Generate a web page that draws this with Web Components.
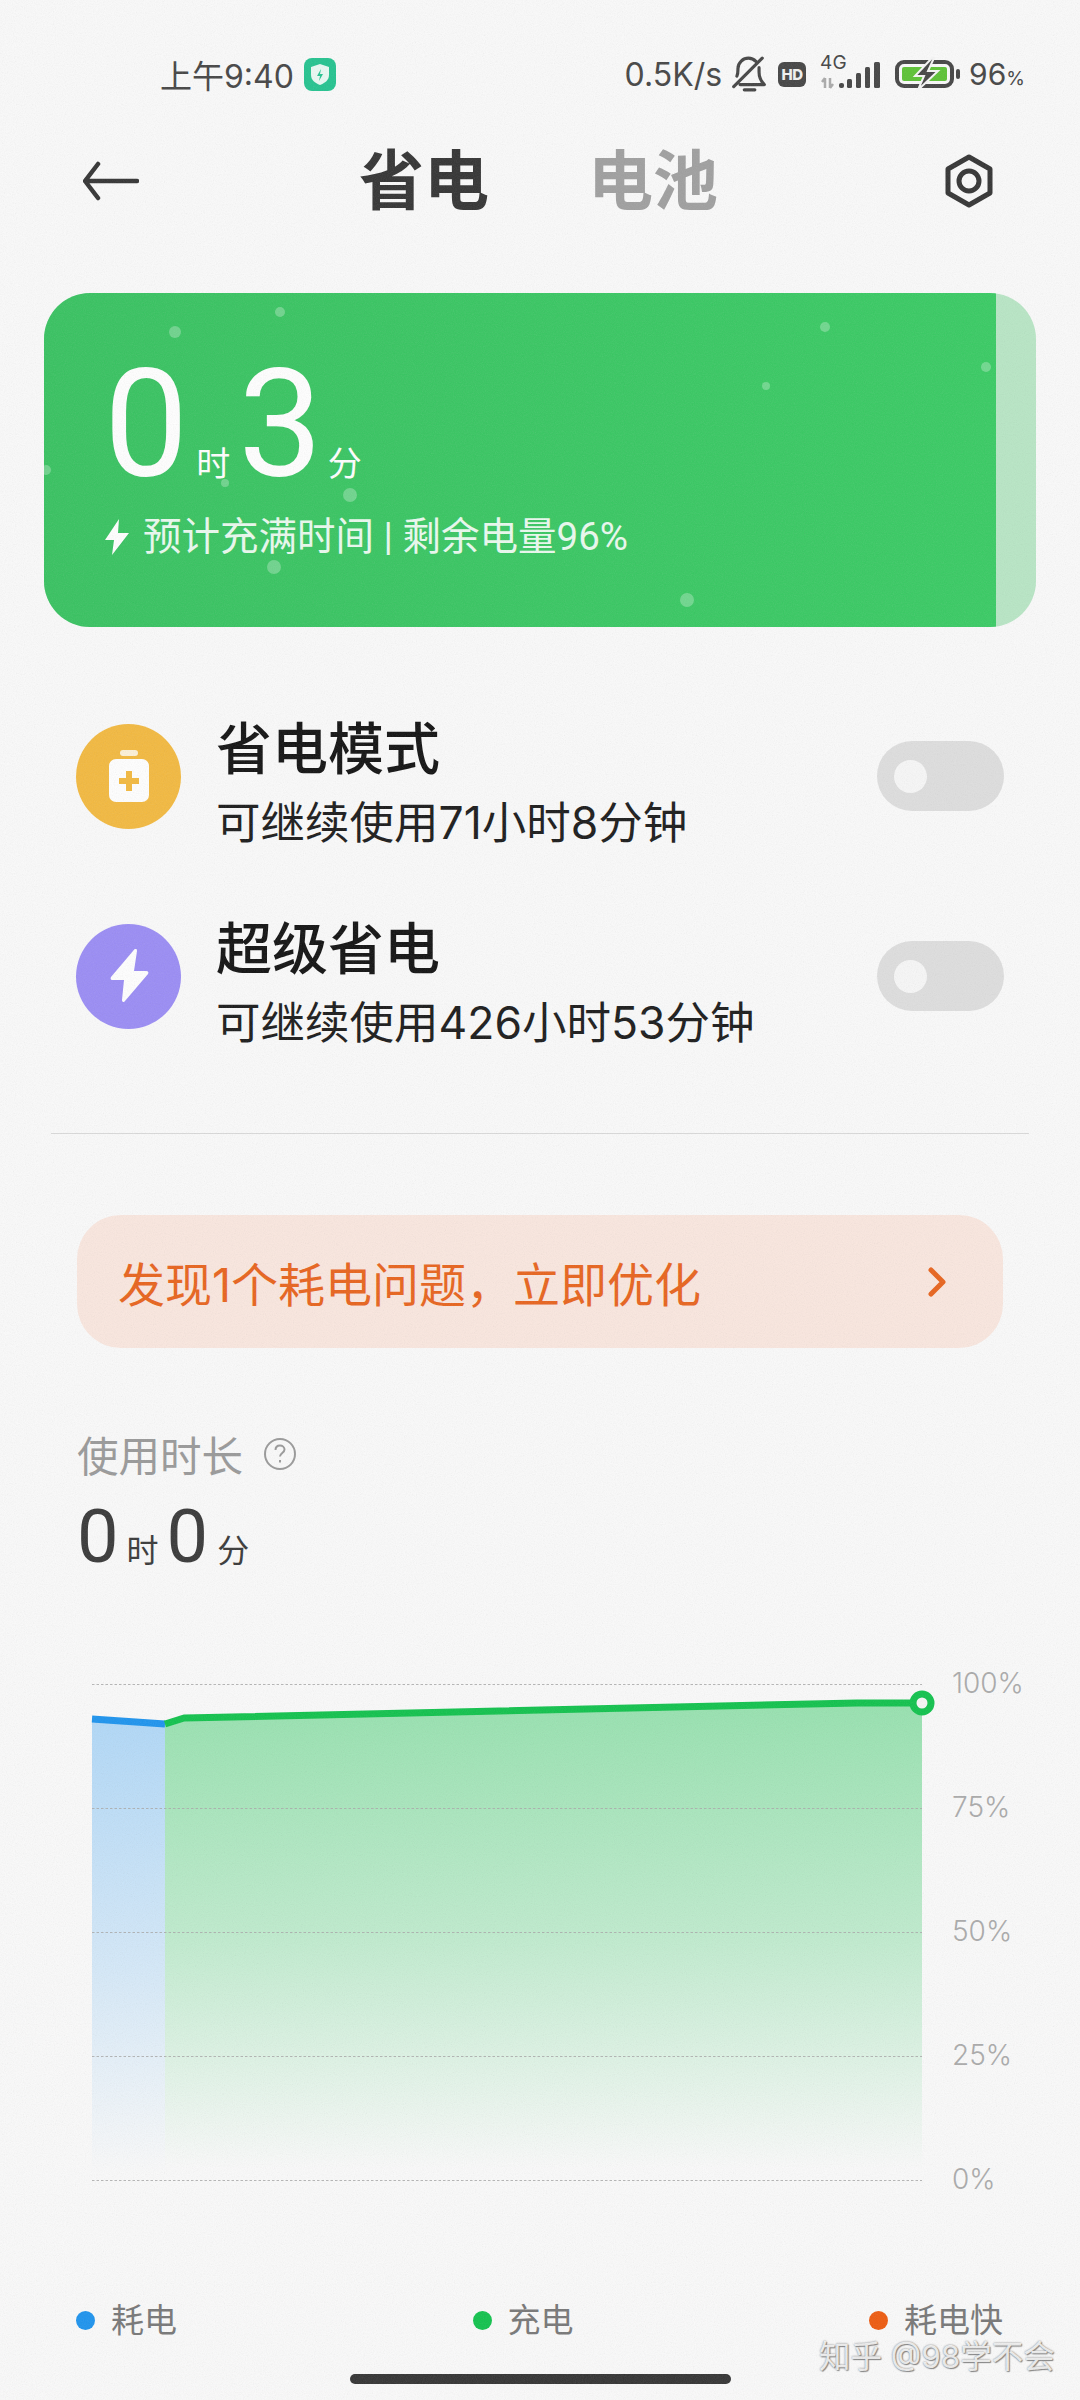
<!DOCTYPE html>
<html lang="zh-CN">
<head>
<meta charset="utf-8">
<title>省电</title>
<style>
  html, body { margin: 0; background: #f6f6f6; }
  body { width: 1080px; height: 2400px; overflow: hidden; font-family: "Inter", "Noto Sans CJK SC", sans-serif; }
</style>
</head>
<body>
<power-screen>
  <status-bar></status-bar>
  <app-header></app-header>
  <charge-card level="96"></charge-card>
  <mode-list>
    <mode-row heading="省电模式" detail="可继续使用71小时8分钟" color="#f3b93f" icon="battery"></mode-row>
    <mode-row heading="超级省电" detail="可继续使用426小时53分钟" color="#9a8cf5" icon="bolt"></mode-row>
  </mode-list>
  <alert-banner>发现1个耗电问题，立即优化</alert-banner>
  <usage-summary></usage-summary>
  <battery-chart></battery-chart>
  <chart-legend></chart-legend>
  <home-bar></home-bar>
</power-screen>

<script>
class PowerScreen extends HTMLElement {
  connectedCallback() {
    const shadowDOM = this.attachShadow({ mode: "open" });
    shadowDOM.innerHTML = `
    <style>
      :host { display: block; position: relative; width: 1080px; height: 2400px; background: #fafafa; color: #333; overflow: hidden; }
      .grain { position: absolute; inset: 0; width: 100%; height: 100%; opacity: .13; pointer-events: none; }
      .mark {
        position: absolute; left: 819px; top: 2341px; font-size: 31.500px; line-height: 32px; white-space: nowrap;
        color: rgba(255,255,255,.85); text-shadow: 0 0 2px #777, 1px 1px 1px #888;
      }
    </style>
    <slot></slot>
    <div class="mark">知乎 @98学不会</div>
    <svg class="grain" aria-hidden="true">
      <filter id="n"><feTurbulence type="fractalNoise" baseFrequency=".9" numOctaves="2" seed="4"/><feColorMatrix type="saturate" values="0"/></filter>
      <rect width="100%" height="100%" filter="url(#n)"/>
    </svg>`;
  }
}

class StatusBar extends HTMLElement {
  connectedCallback() {
    const shadowDOM = this.attachShadow({ mode: "open" });
    shadowDOM.innerHTML = `
    <style>
      :host { display: flex; justify-content: space-between; align-items: center; height: 88px; padding: 30px 55px 2px 160px; font-size: 32px; color: #444; }
      .side { display: flex; align-items: center; }
      svg { display: block; flex: none; }
      .pct { font-size: 19px; }
      .level { font-size: 30px; }
      .time { margin-right: 10px; }
      .hd { flex: none; width: 28px; height: 25px; margin-right: 14px; border-radius: 6px; background: #444; color: #f2f2f2; font-size: 15px; line-height: 25px; font-weight: 800; text-align: center; letter-spacing: -.5px; }
      .net { position: relative; flex: none; width: 62px; height: 32px; margin-right: 13px; }
      .net span { position: absolute; left: 0; top: -5px; font-size: 19px; line-height: 20px; }
      .net svg { position: absolute; left: 0; top: 0; }
    </style>
    <div class="side">
      <span class="time">上午9:40</span>
      <svg width="32" height="33" viewBox="0 0 32 33">
        <rect width="32" height="33" rx="8" fill="#23c38f"/>
        <path d="M16 6l9 3v8c0 5-4 8-9 10-5-2-9-5-9-10V9z" fill="#e9f9f3"/>
        <path d="M17 11l-4 7h3l-1 5 4-7h-3z" fill="#23c38f"/>
      </svg>
    </div>
    <div class="side">
      <span style="margin-right:9px">0.5K/s</span>
      <svg width="35" height="38" viewBox="0 0 32 36" fill="none" stroke="#444" stroke-width="3" stroke-linecap="round" stroke-linejoin="round" style="margin-right:12px">
        <path d="M5 20c1-2 1-4 1-6v-1C6 7 11 3 16 3c3 0 5 1 7 3M26 12v4c0 5 2 9 5 12H8M12 33h10M2 30L29 3"/>
      </svg>
      <span class="hd">HD</span>
      <span class="net">
        <span>4G</span>
        <svg width="62" height="32" viewBox="0 0 60 32">
          <path d="M4 20v10M1 24l3-4M9 30V20M12 26l-3 4" stroke="#aaa" stroke-width="2.500" fill="none"/>
          <g fill="#444"><rect x="18" y="25" width="5" height="5" rx="2"/><rect x="26" y="21" width="5" height="9" rx="1.500"/><rect x="35" y="15" width="5" height="15" rx="1.500"/><rect x="44" y="9" width="5" height="21" rx="1.500"/><rect x="53" y="4" width="6" height="26" rx="1.500"/></g>
        </svg>
      </span>
      <svg width="65" height="34" viewBox="0 0 65 34" style="margin-right:9px">
        <rect x="2" y="5" width="55" height="24" rx="7" fill="none" stroke="#444" stroke-width="4"/>
        <rect x="7" y="10" width="45" height="14" rx="2" fill="#5cc234"/>
        <path d="M37 1L20 19h9l-6 14 20-19h-10l6-13z" fill="#444" stroke="#f6f6f6" stroke-width="2"/>
        <rect x="61" y="12" width="4" height="10" rx="2" fill="#444"/>
      </svg>
      <span class="level">96<span class="pct">%</span></span>
    </div>`;
  }
}

class AppHeader extends HTMLElement {
  connectedCallback() {
    const shadowDOM = this.attachShadow({ mode: "open" });
    shadowDOM.innerHTML = `
    <style>
      :host { display: grid; grid-template-columns: 1fr auto 1fr; align-items: center; height: 122px; padding: 0 86px 0 83px; }
      svg { display: block; }
      .tabs { display: flex; gap: 99px; font-size: 65px; line-height: 122px; font-weight: 700; color: #333; }
      .off { color: #9f9f9f; }
      .end { justify-self: end; }
    </style>
    <svg width="56" height="40" viewBox="0 0 56 40" fill="none" stroke="#333" stroke-width="4.500" stroke-linecap="round" stroke-linejoin="round">
      <path d="M54 20H3M15 3L2 20l13 17"/>
    </svg>
    <div class="tabs"><span>省电</span><span class="off">电池</span></div>
    <svg class="end" width="50" height="54" viewBox="0 0 50 54" fill="none" stroke="#333" stroke-width="5" stroke-linejoin="round">
      <path d="M25 3l21 12v24L25 51 4 39V15z"/><circle cx="25" cy="27" r="10"/>
    </svg>`;
  }
}

class DurationReadout extends HTMLElement {
  connectedCallback() {
    const shadowDOM = this.attachShadow({ mode: "open" });
    const h = this.getAttribute("hours");
    const m = this.getAttribute("minutes");
    shadowDOM.innerHTML = `
    <style>
      :host { display: flex; align-items: baseline; font-family: Roboto, "Noto Sans CJK SC", sans-serif; line-height: 1; }
      b { font-weight: 400; font-size: var(--num-size); }
      i { font-style: normal; font-size: var(--unit-size); margin: 0 var(--unit-gap); font-family: "Noto Sans CJK SC", sans-serif; }
      b + i + b { margin-right: var(--second-gap); }
    </style>
    <b>${h}</b><i>时</i><b>${m}</b><i>分</i>`;
  }
}

class ChargeCard extends HTMLElement {
  connectedCallback() {
    const shadowDOM = this.attachShadow({ mode: "open" });
    const level = this.getAttribute("level");
    const dots = [[236,19,5],[131,39,6],[781,34,5],[942,74,5],[722,93,4],[2,177,5],[181,190,4],[306,202,7],[230,274,7],[643,307,7]];
    shadowDOM.innerHTML = `
    <style>
      :host { display: block; position: relative; height: 334px; margin: 51px 44px 0; border-radius: 46px; background: #b8e6c5; overflow: hidden; color: #fff; }
      .fill { height: 100%; width: ${level}%; box-sizing: border-box; padding: 57px 0 0 60px; background: linear-gradient(90deg, #37c260, #38cb63); }
      duration-readout { --num-size: 150px; --unit-size: 34px; --unit-gap: 8px; --second-gap: -3px; height: 140px; }
      .note { display: flex; align-items: center; gap: 14px; margin: 22px 0 0 1px; font-family: Roboto, "Noto Sans CJK SC", sans-serif; font-size: 38.500px; line-height: 50px; color: #eafaef; white-space: nowrap; }
      .dots { position: absolute; inset: 0; pointer-events: none; }
    </style>
    <div class="fill">
      <duration-readout hours="0" minutes="3"></duration-readout>
      <div class="note">
        <svg width="24" height="36" viewBox="0 0 24 36"><path d="M14 0L0 21h9l-2 15 17-22H13z" fill="#fff"/></svg>
        <span>预计充满时间 | 剩余电量96%</span>
      </div>
    </div>
    <svg class="dots" width="992" height="334">${dots.map(([x, y, r]) => `<circle cx="${x}" cy="${y}" r="${r}" fill="#fff" opacity=".28"/>`).join("")}</svg>`;
  }
}

class ModeList extends HTMLElement {
  connectedCallback() {
    const shadowDOM = this.attachShadow({ mode: "open" });
    shadowDOM.innerHTML = `
    <style>
      :host { display: block; margin: 49px 51px 0; padding-bottom: 57px; border-bottom: 1px solid #d9d9d9; }
    </style>
    <slot></slot>`;
  }
}

class ModeRow extends HTMLElement {
  connectedCallback() {
    const shadowDOM = this.attachShadow({ mode: "open" });
    const icons = {
      battery: `<svg width="42" height="52" viewBox="0 0 42 52"><rect x="12" y="0" width="18" height="6" rx="3" fill="#fff" opacity=".8"/><rect x="1" y="9" width="40" height="43" rx="7" fill="#fff"/><path d="M21 21v20M11 31h20" stroke="${this.getAttribute("color")}" stroke-width="6"/></svg>`,
      bolt: `<svg width="42" height="54" viewBox="0 0 42 54"><path d="M25 2L3 28c-1 2 0 3 2 3h11l-2 20c0 2 2 3 3 1l23-27c1-2 0-3-2-3H26l3-20c0-3-2-3-4 0z" fill="#fff"/></svg>`
    };
    shadowDOM.innerHTML = `
    <style>
      :host { display: flex; align-items: center; height: 200px; padding: 0 25px; }
      .icon { display: flex; align-items: center; justify-content: center; flex: none; width: 105px; height: 105px; border-radius: 50%; background: ${this.getAttribute("color")}; }
      .text { flex: 1; margin-left: 35px; padding-top: 14px; color: #111; }
      .heading { font-size: 56px; line-height: 72px; font-weight: 500; }
      .detail { font-size: 44.500px; line-height: 60px; margin-top: 8px; color: #1a1a1a; }
      .toggle { display: flex; align-items: center; width: 127px; height: 70px; padding-left: 17px; box-sizing: border-box; border-radius: 35px; background: #dedede; }
      .toggle::before { content: ""; width: 33px; height: 33px; border-radius: 50%; background: #f7f7f7; }
    </style>
    <div class="icon">${icons[this.getAttribute("icon")]}</div>
    <div class="text">
      <div class="heading">${this.getAttribute("heading")}</div>
      <div class="detail">${this.getAttribute("detail")}</div>
    </div>
    <div class="toggle"></div>`;
  }
}

class AlertBanner extends HTMLElement {
  connectedCallback() {
    const shadowDOM = this.attachShadow({ mode: "open" });
    shadowDOM.innerHTML = `
    <style>
      :host { display: flex; align-items: center; justify-content: space-between; height: 133px; margin: 81px 77px 0; padding: 0 56px 0 41px; border-radius: 44px; background: #fae7df; color: #e8631c; font-size: 47px; }
      svg { display: block; }
    </style>
    <span><slot></slot></span>
    <svg width="20" height="30" viewBox="0 0 20 30" fill="none" stroke="#e8631c" stroke-width="5" stroke-linecap="round" stroke-linejoin="round"><path d="M4 3l12 12L4 27"/></svg>`;
  }
}

class UsageSummary extends HTMLElement {
  connectedCallback() {
    const shadowDOM = this.attachShadow({ mode: "open" });
    shadowDOM.innerHTML = `
    <style>
      :host { display: block; margin: 79px 77px 0; }
      .label { display: flex; align-items: center; gap: 20px; height: 54px; font-size: 41.500px; color: #999; }
      svg { display: block; }
      duration-readout { --num-size: 74px; --unit-size: 32px; --unit-gap: 8px; --second-gap: 1px; margin-top: 19px; color: #383838; }
    </style>
    <div class="label">
      <span>使用时长</span>
      <svg width="34" height="34" viewBox="0 0 34 34" fill="none" stroke="#999" stroke-width="2"><circle cx="17" cy="17" r="15"/><path d="M12.500 13c0-3 2-4.500 4.500-4.500s4.500 1.700 4.500 4c0 3.500-4.500 3.500-4.500 7"/><path d="M17 23v2.500"/></svg>
    </div>
    <duration-readout hours="0" minutes="0"></duration-readout>`;
  }
}

class BatteryChart extends HTMLElement {
  connectedCallback() {
    const shadowDOM = this.attachShadow({ mode: "open" });
    const labels = ["100%", "75%", "50%", "25%", "0%"];
    // y of 0..4 gridlines, 124px apart
    const lines = [0, 124, 248, 372, 496];
    shadowDOM.innerHTML = `
    <style>
      :host { display: flex; height: 497px; margin: 110px 0 0 92px; }
      svg { display: block; flex: none; overflow: visible; }
      .axis { display: flex; flex-direction: column; justify-content: space-between; margin: -1px 0 1px 30px; font-size: 28px; color: #aaa; font-weight: 300; }
      .axis span { display: block; height: 1px; line-height: 1px; }
    </style>
    <svg width="830" height="497" viewBox="0 0 830 497">
      <defs>
        <linearGradient id="blue" x1="0" y1="0" x2="0" y2="1"><stop offset="0" stop-color="#2196f3" stop-opacity=".34"/><stop offset=".55" stop-color="#2196f3" stop-opacity=".17"/><stop offset="1" stop-color="#2196f3" stop-opacity="0"/></linearGradient>
        <linearGradient id="green" x1="0" y1="0" x2="0" y2="1"><stop offset="0" stop-color="#17c24f" stop-opacity=".44"/><stop offset=".5" stop-color="#17c24f" stop-opacity=".26"/><stop offset="1" stop-color="#17c24f" stop-opacity="0"/></linearGradient>
      </defs>
      <path d="M0 35L73 40V490H0z" fill="url(#blue)"/>
      <path d="M73 40L92 34L765 19H830V485H73z" fill="url(#green)"/>
      ${lines.map(y => `<line x1="0" x2="830" y1="${y + .5}" y2="${y + .5}" stroke="#aaa" stroke-width="1" stroke-dasharray="2.500 2" opacity=".85"/>`).join("")}
      <path d="M0 35L73 40" fill="none" stroke="#1c93ee" stroke-width="7"/>
      <path d="M73 40L92 34L765 19H830" fill="none" stroke="#10c24c" stroke-width="7" stroke-linejoin="round"/>
      <circle cx="830" cy="19" r="9" fill="#f6f6f6" stroke="#10c24c" stroke-width="7"/>
    </svg>
    <div class="axis">${labels.map(t => `<span>${t}</span>`).join("")}</div>`;
  }
}

class ChartLegend extends HTMLElement {
  connectedCallback() {
    const shadowDOM = this.attachShadow({ mode: "open" });
    const items = [["#1c93ee", "耗电"], ["#10c24c", "充电"], ["#ee5a0e", "耗电快"]];
    shadowDOM.innerHTML = `
    <style>
      :host { display: flex; justify-content: space-between; align-items: center; height: 50px; margin: 114px 77px 0 76px; font-size: 33px; line-height: 1; color: #777; }
      div { display: flex; align-items: center; gap: 16px; }
      i { width: 19px; height: 19px; border-radius: 50%; }
    </style>
    ${items.map(([c, t]) => `<div><i style="background:${c}"></i><span>${t}</span></div>`).join("")}`;
  }
}

class HomeBar extends HTMLElement {
  connectedCallback() {
    const shadowDOM = this.attachShadow({ mode: "open" });
    shadowDOM.innerHTML = `
    <style>
      :host { display: block; width: 381px; height: 10px; margin: 29px auto 0; border-radius: 5px; background: #333; }
    </style>`;
  }
}

customElements.define("power-screen", PowerScreen);
customElements.define("status-bar", StatusBar);
customElements.define("app-header", AppHeader);
customElements.define("duration-readout", DurationReadout);
customElements.define("charge-card", ChargeCard);
customElements.define("mode-list", ModeList);
customElements.define("mode-row", ModeRow);
customElements.define("alert-banner", AlertBanner);
customElements.define("usage-summary", UsageSummary);
customElements.define("battery-chart", BatteryChart);
customElements.define("chart-legend", ChartLegend);
customElements.define("home-bar", HomeBar);
</script>
</body>
</html>
